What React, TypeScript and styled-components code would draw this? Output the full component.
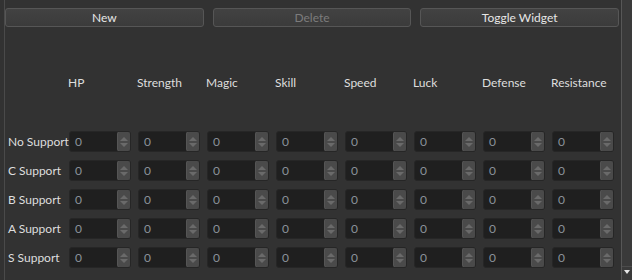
import styled, { createGlobalStyle } from 'styled-components';

const GlobalStyle = createGlobalStyle`
  html, body {
    margin: 0;
    padding: 0;
    background: #323232;
  }
  body {
    font-family: Lato, "Noto Sans", sans-serif;
    font-size: 12px;
    color: #dedede;
  }
`;

const STATS = ['HP', 'Strength', 'Magic', 'Skill', 'Speed', 'Luck', 'Defense', 'Resistance'];
const RANKS = ['No Support', 'C Support', 'B Support', 'A Support', 'S Support'];

const Window = styled.div`
  width: 632px;
  height: 280px;
  display: flex;
  background: #323232;
  overflow: hidden;
`;

const Frame = styled.div`
  flex: 1;
  margin-left: 4px;
  height: 276px;
  border-left: 1px solid #4a4a4a;
  border-bottom: 1px solid #4a4a4a;
  padding: 8px 2px 0 0;
  display: flex;
  flex-direction: column;
`;

const ButtonRow = styled.div`
  display: grid;
  grid-template-columns: repeat(3, 1fr);
  column-gap: 9px;
`;

const PushButton = styled.button<{ $disabled?: boolean }>`
  height: 19px;
  padding: 0;
  border: 1px solid #565656;
  border-radius: 3px;
  background: linear-gradient(#424242, #3b3b3b);
  color: ${(p) => (p.$disabled ? '#7c7c7c' : '#e6e6e6')};
  font: inherit;
  font-size: 12px;
  line-height: 17px;
`;

const Grid = styled.div`
  margin: 0 5px 0 3px;
  display: grid;
  grid-template-columns: 54px repeat(8, 1fr);
  column-gap: 7px;
`;

const HeaderRow = styled(Grid)`
  margin-top: 47px;
  height: 16px;
  align-items: center;
`;

const Header = styled.div`
  margin-left: -1px;
  white-space: nowrap;
`;

const Rows = styled.div`
  margin-top: 41px;
  display: flex;
  flex-direction: column;
  gap: 8px;
`;

const Row = styled(Grid)`
  height: 21px;
  align-items: center;
`;

const Label = styled.div`
  white-space: nowrap;
`;

const Spin = styled.div`
  height: 21px;
  display: flex;
  background: #1f1f1f;
  border: 1px solid #262626;
  border-radius: 3px;
  box-sizing: border-box;
  overflow: hidden;
`;

const SpinValue = styled.div`
  flex: 1;
  padding-left: 5px;
  color: #8a929a;
  line-height: 19px;
`;

const SpinButtons = styled.div`
  width: 12px;
  background: #4a4a4a;
  border: 1px solid #555555;
  border-radius: 3px;
  margin: -1px -1px -1px 0;
  display: flex;
  flex-direction: column;
  align-items: center;
  justify-content: center;
  gap: 2px;
`;

const Arrow = styled.div<{ $up?: boolean }>`
  width: 0;
  height: 0;
  border-left: 4px solid transparent;
  border-right: 4px solid transparent;
  ${(p) =>
    p.$up ? 'border-bottom: 4px solid #6a6a6a;' : 'border-top: 4px solid #6a6a6a;'}
`;

const ScrollBar = styled.div`
  width: 10px;
  height: 280px;
  border-left: 1px solid #575757;
  background: #3a3a3a;
  display: flex;
  flex-direction: column;
  justify-content: flex-end;
`;

const ScrollArrow = styled.div`
  height: 14px;
  border-top: 1px solid #4c4c4c;
  display: flex;
  align-items: flex-start;
  justify-content: center;
  padding-top: 3px;
  box-sizing: border-box;
  &::after {
    content: '';
    width: 0;
    height: 0;
    border-left: 3px solid transparent;
    border-right: 3px solid transparent;
    border-top: 4px solid #e8e8e8;
  }
`;

function SpinBox() {
  return (
    <Spin>
      <SpinValue>0</SpinValue>
      <SpinButtons>
        <Arrow $up />
        <Arrow />
      </SpinButtons>
    </Spin>
  );
}

export default function App() {
  return (
    <Window>
      <GlobalStyle />
      <Frame>
        <ButtonRow>
          <PushButton>New</PushButton>
          <PushButton $disabled disabled>
            Delete
          </PushButton>
          <PushButton>Toggle Widget</PushButton>
        </ButtonRow>
        <HeaderRow>
          <div />
          {STATS.map((s) => (
            <Header key={s}>{s}</Header>
          ))}
        </HeaderRow>
        <Rows>
          {RANKS.map((r) => (
            <Row key={r}>
              <Label>{r}</Label>
              {STATS.map((s) => (
                <SpinBox key={s} />
              ))}
            </Row>
          ))}
        </Rows>
      </Frame>
      <ScrollBar>
        <ScrollArrow />
      </ScrollBar>
    </Window>
  );
}
